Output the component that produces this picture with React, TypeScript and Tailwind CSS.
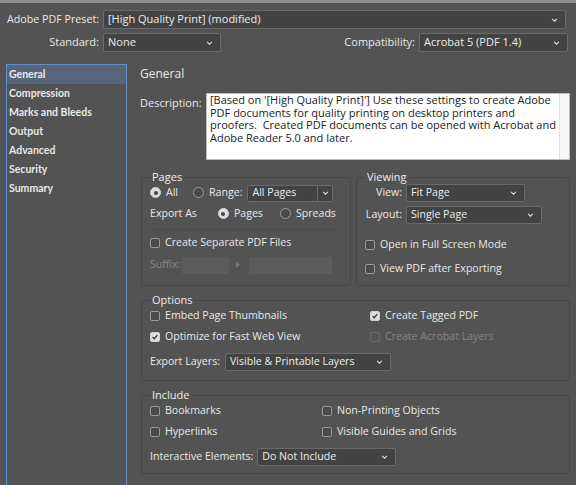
import type { ReactNode } from "react";

const FONT = "font-['Open_Sans','Liberation_Sans',sans-serif]";

const Chevron = ({ className = "" }: { className?: string }) => (
  <svg viewBox="0 0 8 5" className={`h-[4px] w-[7px] ${className}`}>
    <polyline points="1,1 4,4 7,1" fill="none" stroke="#dcdcdc" strokeWidth="1.3" />
  </svg>
);

interface SelectProps {
  value: string;
  className: string;
  split?: boolean;
}

const Select = ({ value, className, split }: SelectProps) => (
  <div className={`flex items-center rounded-[2px] border border-[#6a6a6a] bg-[#434343] text-[#ececec] ${className}`}>
    <span className="flex-1 truncate whitespace-nowrap pl-[4px]">{value}</span>
    {split ? (
      <div className="flex h-full w-[15px] items-center justify-center border-l border-[#6a6a6a]">
        <Chevron />
      </div>
    ) : (
      <Chevron className="mr-[7px]" />
    )}
  </div>
);

const Checkbox = ({ label, checked, disabled }: { label: string; checked?: boolean; disabled?: boolean }) => (
  <div className={`flex h-[18px] items-center gap-[5px] whitespace-nowrap ${disabled ? "text-[#858585]" : "text-[#e8e8e8]"}`}>
    <div
      className={`flex h-[10px] w-[10px] items-center justify-center rounded-[2px] border ${
        checked ? "border-[#cfcfcf] bg-[#dcdcdc]" : disabled ? "border-[#6a6a6a] bg-transparent" : "border-[#9a9a9a] bg-[#4a4a4a]"
      }`}
    >
      {checked && (
        <svg viewBox="0 0 10 10" className="h-[8px] w-[8px]">
          <polyline points="2,5.2 4,7.2 8,2.6" fill="none" stroke="#333" strokeWidth="1.6" />
        </svg>
      )}
    </div>
    <span>{label}</span>
  </div>
);

const Radio = ({ label, checked }: { label: string; checked?: boolean }) => (
  <div className="flex items-center gap-[5px] whitespace-nowrap text-[#e8e8e8]">
    <div
      className={`flex h-[11px] w-[11px] items-center justify-center rounded-full border ${
        checked ? "border-[#d4d4d4] bg-[#dcdcdc]" : "border-[#a0a0a0] bg-[#4a4a4a]"
      }`}
    >
      {checked && <div className="h-[4px] w-[4px] rounded-full bg-[#444]" />}
    </div>
    <span>{label}</span>
  </div>
);

const Group = ({ title, className, children }: { title: string; className: string; children: ReactNode }) => (
  <fieldset className={`rounded-[3px] border border-[#474747] ${className}`}>
    <legend className="px-[2px] text-[11px] leading-[14px] text-[#ececec]">{title}</legend>
    {children}
  </fieldset>
);

const sections = ["General", "Compression", "Marks and Bleeds", "Output", "Advanced", "Security", "Summary"];

export default function App() {
  return (
    <div className={`flex h-[485px] w-[576px] flex-col overflow-hidden bg-[#535353] text-[10.6px] text-[#e8e8e8] ${FONT}`}>
      <div className="h-[3px] bg-[#8e8e8e]" />

      {/* Preset rows */}
      <div className="mt-[7px] flex h-[19px] items-center whitespace-nowrap">
        <span className="w-[99px] text-right text-[10.7px]">Adobe PDF Preset:</span>
        <Select value="[High Quality Print] (modified)" className="ml-[4px] mr-[10px] h-[19px] flex-1 text-[11px]" />
      </div>
      <div className="mt-[4px] flex h-[19px] items-center whitespace-nowrap">
        <span className="w-[99px] text-right text-[11px]">Standard:</span>
        <Select value="None" className="ml-[4px] h-[19px] w-[118px] text-[11px]" />
        <span className="flex-1 pr-[4px] text-right text-[11px]">Compatibility:</span>
        <Select value="Acrobat 5 (PDF 1.4)" className="mr-[8px] h-[19px] w-[149px] text-[11px]" />
      </div>

      <div className="mt-[12px] flex flex-1">
        {/* Sidebar */}
        <div className="ml-[6px] -mb-[4px] w-[121px] border border-[#5f8fd0] font-['Lato','Open_Sans',sans-serif] text-[10.5px] font-bold">
          {sections.map((s, i) => (
            <div key={s} className={`flex h-[19px] items-center pl-[2px] ${i === 0 ? "bg-[#586579]" : ""}`}>
              {s}
            </div>
          ))}
        </div>

        {/* Main */}
        <div className="ml-[13px] flex w-[430px] flex-col">
          <div className="flex h-[19px] items-center text-[12px]">General</div>

          <div className="mt-[10px] flex">
            <span className="w-[66px] pt-[2px] text-[11px]">Description:</span>
            <div className="flex h-[67px] w-[364px] border border-[#bdbdbd] bg-white">
              <p className="flex-1 px-[3px] text-[11px] leading-[12.5px] text-[#222]">
                [Based on '[High Quality Print]'] Use these settings to create Adobe PDF documents for quality printing on desktop printers and proofers.&nbsp; Created PDF documents can be opened with Acrobat and Adobe Reader 5.0 and later.
              </p>
              <div className="w-[10px] border-l border-[#e2e2e2] bg-[#f7f7f7]" />
            </div>
          </div>

          <div className="mt-[10px] flex gap-[5px] pl-[1px]">
            <Group title="Pages" className="h-[116px] w-[211px] px-[8px]">
              <div className="flex h-[18px] items-center">
                <Radio label="All" checked />
                <div className="ml-[15px]">
                  <Radio label="Range:" />
                </div>
                <Select value="All Pages" split className="ml-[5px] h-[17px] w-[86px]" />
              </div>
              <div className="mt-[3px] flex h-[18px] items-center">
                <span>Export As</span>
                <div className="ml-[21px]">
                  <Radio label="Pages" checked />
                </div>
                <div className="ml-[17px]">
                  <Radio label="Spreads" />
                </div>
              </div>
              <div className="mr-[2px] mt-[6px] border-t border-[#4b4b4b]" />
              <div className="mt-[4px]">
                <Checkbox label="Create Separate PDF Files" />
              </div>
              <div className="mt-[4px] flex h-[18px] items-center text-[#878787]">
                <span>Suffix:</span>
                <div className="ml-[2px] h-[17px] w-[47px] bg-[#5b5b5b]" />
                <svg viewBox="0 0 4 6" className="ml-[7px] h-[6px] w-[4px]">
                  <polygon points="0,0 4,3 0,6" fill="#7a7a7a" />
                </svg>
                <div className="ml-[9px] h-[17px] w-[83px] bg-[#5b5b5b]" />
              </div>
            </Group>

            <Group title="Viewing" className="h-[116px] w-[215px] px-[8px]">
              <div className="flex h-[18px] items-center">
                <span className="w-[37px] text-right">View:</span>
                <Select value="Fit Page" className="ml-[4px] h-[18px] w-[119px]" />
              </div>
              <div className="mt-[4px] flex h-[18px] items-center">
                <span className="w-[37px] text-right">Layout:</span>
                <Select value="Single Page" className="ml-[4px] h-[18px] w-[136px]" />
              </div>
              <div className="mt-[12px]">
                <Checkbox label="Open in Full Screen Mode" />
              </div>
              <div className="mt-[6px]">
                <Checkbox label="View PDF after Exporting" />
              </div>
            </Group>
          </div>

          <Group title="Options" className="ml-[1px] mt-[7px] h-[88px] w-[429px] px-[8px]">
            <div className="grid grid-cols-[220px_1fr] gap-y-[3px]">
              <Checkbox label="Embed Page Thumbnails" />
              <Checkbox label="Create Tagged PDF" checked />
              <Checkbox label="Optimize for Fast Web View" checked />
              <Checkbox label="Create Acrobat Layers" disabled />
            </div>
            <div className="mt-[7px] flex h-[18px] items-center">
              <span>Export Layers:</span>
              <Select value="Visible & Printable Layers" className="ml-[5px] h-[18px] w-[166px]" />
            </div>
          </Group>

          <Group title="Include" className="ml-[1px] mt-[7px] h-[86px] w-[429px] px-[8px]">
            <div className="grid grid-cols-[172px_1fr] gap-y-[3px]">
              <Checkbox label="Bookmarks" />
              <Checkbox label="Non-Printing Objects" />
              <Checkbox label="Hyperlinks" />
              <Checkbox label="Visible Guides and Grids" />
            </div>
            <div className="mt-[7px] flex h-[18px] items-center">
              <span>Interactive Elements:</span>
              <Select value="Do Not Include" className="ml-[4px] h-[18px] w-[139px]" />
            </div>
          </Group>
        </div>
      </div>
    </div>
  );
}
